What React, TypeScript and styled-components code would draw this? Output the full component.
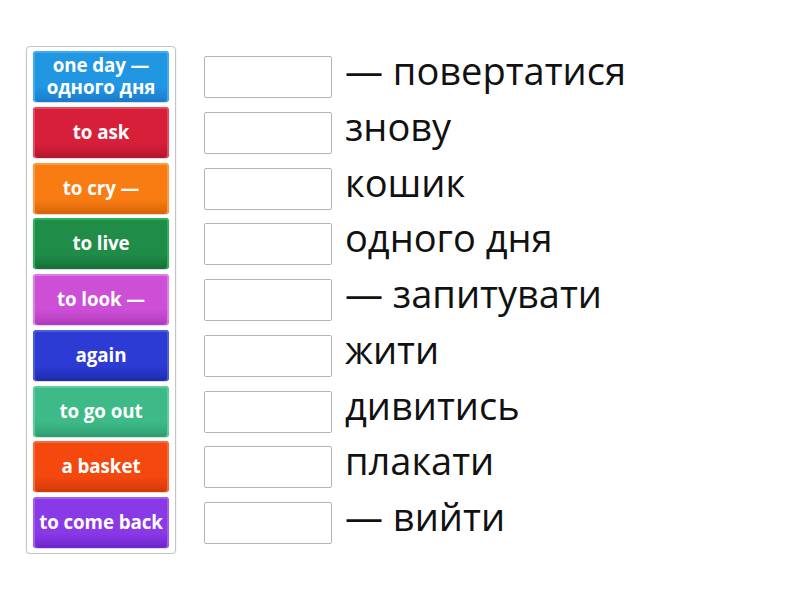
import React from "react";
import styled, { createGlobalStyle } from "styled-components";

const Global = createGlobalStyle`
  html, body { margin: 0; padding: 0; background: #ffffff; }
  body { font-family: "Open Sans", "Noto Sans", sans-serif; }
`;

const Page = styled.div`
  display: flex;
  align-items: flex-start;
  padding: 46px 0 0 26px;
  gap: 28px;
`;

const Bank = styled.div`
  display: flex;
  flex-direction: column;
  gap: 4.75px;
  padding: 4px 6px 5px 6px;
  border: 1px solid #c4c4c4;
  border-radius: 4px;
  box-shadow: 0 1px 2px rgba(0, 0, 0, 0.12);
  background: #fff;
`;

type TileColors = { base: string; light: string; dark: string };

const Tile = styled.div<{ $c: TileColors }>`
  width: 136px;
  height: 51px;
  box-sizing: border-box;
  border-radius: 4px;
  display: flex;
  align-items: center;
  justify-content: center;
  text-align: center;
  color: #ffffff;
  font-family: "Open Sans", sans-serif;
  font-weight: 700;
  font-size: 18.8px;
  line-height: 22px;
  letter-spacing: -0.1px;
  padding: 0 1px 1px;
  white-space: nowrap;
  background: linear-gradient(${(p) => p.$c.base}, ${(p) => p.$c.base} 70%, ${(p) => p.$c.dark});
  box-shadow: inset 0 2px 0 ${(p) => p.$c.light}, inset 2px 0 0 ${(p) => p.$c.light},
    inset -2px 0 0 ${(p) => p.$c.light}, inset 0 -3px 0 ${(p) => p.$c.dark},
    0 1px 1px rgba(0, 0, 0, 0.15);
`;

const Answers = styled.div`
  display: flex;
  flex-direction: column;
  padding-top: 10px;
  gap: 13.75px;
`;

const Row = styled.div`
  display: flex;
  align-items: center;
  height: 42px;
  gap: 13px;
`;

const Slot = styled.div`
  width: 128px;
  height: 42px;
  box-sizing: border-box;
  border: 1px solid #b4b4b4;
  border-radius: 2px;
  background: #fff;
  flex-shrink: 0;
`;

const Label = styled.div`
  font-family: "Open Sans", sans-serif;
  font-size: 38px;
  color: #111111;
  white-space: nowrap;
  line-height: 1;
  padding-bottom: 14px;
`;

const tiles: { text: React.ReactNode; c: TileColors }[] = [
  { text: <>one day —<br />одного дня</>, c: { base: "#2196e3", light: "#43abef", dark: "#1a7ccc" } },
  { text: "to ask", c: { base: "#d81f3a", light: "#e54a5d", dark: "#b8162e" } },
  { text: "to cry —", c: { base: "#f87c12", light: "#fb9a3f", dark: "#da6608" } },
  { text: "to live", c: { base: "#1f8d48", light: "#2db35c", dark: "#167238" } },
  { text: "to look —", c: { base: "#cc4fd6", light: "#dc7ee3", dark: "#b23bbd" } },
  { text: "again", c: { base: "#2b3bd4", light: "#4b5ce0", dark: "#1f2cae" } },
  { text: "to go out", c: { base: "#3dba87", light: "#5dcc9e", dark: "#2f9f72" } },
  { text: "a basket", c: { base: "#f4480f", light: "#f86b3a", dark: "#d43a08" } },
  { text: "to come back", c: { base: "#8a39e6", light: "#a05ff0", dark: "#6f28cf" } },
];

const answers: string[] = [
  "— повертатися",
  "знову",
  "кошик",
  "одного дня",
  "— запитувати",
  "жити",
  "дивитись",
  "плакати",
  "— вийти",
];

export default function App() {
  return (
    <>
      <Global />
      <Page>
        <Bank>
          {tiles.map((t, i) => (
            <Tile key={i} $c={t.c}>
              <span>{t.text}</span>
            </Tile>
          ))}
        </Bank>
        <Answers>
          {answers.map((a, i) => (
            <Row key={i}>
              <Slot />
              <Label>{a}</Label>
            </Row>
          ))}
        </Answers>
      </Page>
    </>
  );
}
